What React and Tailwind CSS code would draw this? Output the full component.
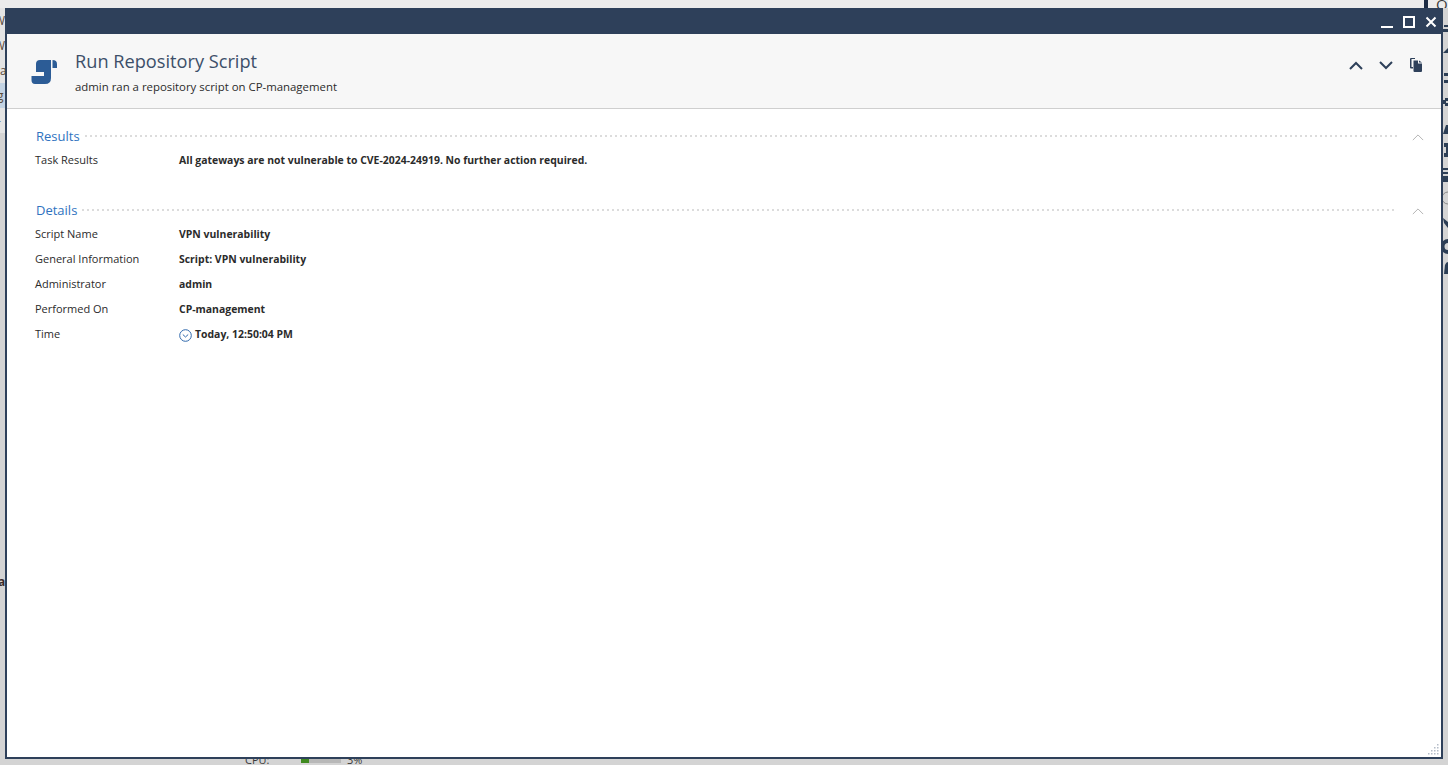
import React from "react";

const FONT = "font-['Open_Sans','Noto_Sans',sans-serif]";

const DETAILS = [
  ["Script Name", "VPN vulnerability"],
  ["General Information", "Script: VPN vulnerability"],
  ["Administrator", "admin"],
  ["Performed On", "CP-management"],
];

function ChevronUp({ className }) {
  return (
    <svg viewBox="0 0 14 8" className={className} fill="none" stroke="currentColor">
      <path d="M1 7 L7 1 L13 7" />
    </svg>
  );
}

function Section({ title, children }) {
  return (
    <section>
      <div className="flex items-center h-5">
        <span className="text-[13px] leading-5 text-[#2f73c0] ml-[1px]">{title}</span>
        <div className="flex-1 mx-[5px] h-[2px] bg-[linear-gradient(to_right,#dcdcdc_2px,transparent_2px)] bg-[length:5px_2px]" />
        <ChevronUp className="w-[12px] h-[7px] mr-[17px] ml-[10px] mt-[2px] text-[#a8a8a8]" />
      </div>
      {children}
    </section>
  );
}

function Row({ label, children }) {
  return (
    <div className="flex h-[25px] items-center text-[11px] leading-4 text-[#2b2b2b]">
      <div className="w-[144px]">{label}</div>
      <div className="font-bold text-[10.45px]">{children}</div>
    </div>
  );
}

export default function App() {
  return (
    <div className={`relative h-[765px] w-[1448px] overflow-hidden bg-[#d4d4d4] ${FONT}`}>
      {/* dimmed page behind the dialog */}
      <div className="h-[8px] bg-[#ececec]" />
      <div className="absolute left-0 top-[8px] w-[5px] h-[125px] bg-[#e4e4e4] overflow-hidden text-[12px] leading-[25px] text-[#5a4a3a]">
        <div className="-ml-[6px]">W</div>
        <div className="-ml-[6px]">W</div>
        <div className="-ml-[5px]">ra</div>
        <div className="-ml-[3px] bg-[#c3d3e3]">g</div>
        <div className="-ml-[3px]">-e</div>
      </div>
      <div className="absolute left-0 top-[573px] w-[5px] overflow-hidden text-[12px] font-bold text-[#3a2a2a]">
        <div className="-ml-[2px]">a</div>
      </div>
      <svg viewBox="0 0 5 260" className="absolute right-0 top-[22px] w-[5px] h-[260px]" fill="#2c3e55">
        <path d="M1 3 H5 V5 H1 Z M0 7 H5 V10 H0 Z" />
        <path d="M0 31 L5 26 V31 Z" />
        <path d="M1 51 H5 V54 H1 Z M1 58 H5 V61 H1 Z" />
        <path d="M2 76 H5 V79 H3 V81 H5 V84 H2 V82 H0 V78 H2 Z" />
        <path d="M0 112 L3 103 H5 V112 Z" />
        <path d="M1 121 H5 V135 H1 V131 H3 V125 H1 Z" />
        <path d="M0 146 H5 V148 H0 Z M0 150 H5 V152 H0 Z M0 154 H5 V160 H0 Z" />
        <path d="M5 170 A6 6 0 0 0 5 182" fill="none" stroke="#8a8a8a" />
        <path d="M0 196 L5 200 V206 L1 201 Z" />
        <path d="M5 217 A7 7 0 0 0 5 232 V228 A3 3 0 0 1 5 221 Z" />
        <path d="M2 243 Q3 240 5 240 V252 H1 Z" />
      </svg>
      <div className="absolute left-[1424px] top-0 w-[24px] h-[8px] flex overflow-hidden">
        <div className="w-[4px] h-full bg-[#1d2c44]" />
        <span className="ml-[8px] -mt-[6px] text-[15px] leading-5 text-[#3a3a3a]">O</span>
      </div>
      <div className="absolute left-[245px] top-[756px] flex items-center h-[9px] text-[11px] text-[#3a3a3a]">
        <span className="w-[56px]">CPU:</span>
        <div className="flex w-[40px] h-[5px] bg-[#b8b8b8]">
          <div className="w-[8px] bg-[#3f8a1f]" />
        </div>
        <span className="ml-[6px]">3%</span>
      </div>

      {/* dialog */}
      <div className="absolute left-[5px] top-[8px] w-[1438px] h-[751px] flex flex-col bg-white border-2 border-[#2e405a] border-t-0">
        <div className="h-[26px] shrink-0 bg-[#2e405a] flex items-center justify-end gap-[10px] pr-[4px] text-white">
          <svg viewBox="0 0 12 12" className="w-[12px] h-[12px] mt-[1px]" fill="currentColor">
            <rect x="0" y="10" width="12" height="2" />
          </svg>
          <svg viewBox="0 0 12 12" className="w-[12px] h-[12px] mt-[1px]" fill="none" stroke="currentColor" strokeWidth="2">
            <rect x="1" y="1" width="10" height="10" />
          </svg>
          <svg viewBox="0 0 12 12" className="w-[12px] h-[12px] mt-[1px]" fill="none" stroke="currentColor" strokeWidth="2">
            <path d="M1.5 1.5 L10.5 10.5 M10.5 1.5 L1.5 10.5" />
          </svg>
        </div>

        <header className="h-[75px] shrink-0 bg-[#f7f7f7] border-b border-[#cfcfcf] flex items-center pl-[24px] pr-[19px]">
          <svg viewBox="0 0 26 25" className="w-[26px] h-[25px] shrink-0">
            <path
              fill="#2c5c96"
              d="M5 5 Q5 1 9 1 L20 1 L20 19 Q20 25 14 25 L4 25 Q0.500 25 0.500 21 L0.500 17 L13 17 L13 13 L5 13 Z"
            />
            <path fill="#2c5c96" d="M21.500 1 Q26 1 26 5 L26 9 L21.500 9 Z" />
          </svg>
          <div className="ml-[18px] pt-[2px]">
            <div className="text-[18.2px] leading-6 text-[#3d4f69] font-medium">Run Repository Script</div>
            <div className="text-[11.4px] leading-4 mt-[6px] text-[#2b2b2b]">admin ran a repository script on CP-management</div>
          </div>
          <div className="ml-auto flex items-center gap-[16px] -mt-[12px] text-[#2e405a]">
            <svg viewBox="0 0 14 9" className="w-[14px] h-[9px]" fill="none" stroke="currentColor" strokeWidth="2">
              <path d="M1 8 L7 2 L13 8" />
            </svg>
            <svg viewBox="0 0 14 9" className="w-[14px] h-[9px]" fill="none" stroke="currentColor" strokeWidth="2">
              <path d="M1 1 L7 7 L13 1" />
            </svg>
            <svg viewBox="0 0 12 14" className="w-[12px] h-[14px] ml-[1px]" fill="currentColor">
              <path d="M0 1 Q0 0 1 0 L5 0 L5 1 L1.500 1 L1.500 9 L3 9 L3 10.500 L1 10.500 Q0 10.500 0 9.500 Z" />
              <path d="M3.500 2.500 L8 2.500 L8 5.500 L12 5.500 L12 13 Q12 14 11 14 L4.500 14 Q3.500 14 3.500 13 Z M9 2.500 L12 4.500 L9 4.500 Z" />
            </svg>
          </div>
        </header>

        <div className="pl-[28px] pt-[17px] flex flex-col gap-[28px]">
          <Section title="Results">
            <div className="mt-[1px]">
              <Row label="Task Results">All gateways are not vulnerable to CVE-2024-24919. No further action required.</Row>
            </div>
          </Section>
          <Section title="Details">
            <div className="mt-[1px]">
              {DETAILS.map(([label, value]) => (
                <Row key={label} label={label}>{value}</Row>
              ))}
              <Row label="Time">
                <span className="flex items-center">
                  <svg viewBox="0 0 13 13" className="w-[13px] h-[13px] mr-[3px] mt-[4px]" fill="none" stroke="#2f68ac">
                    <circle cx="6.500" cy="6.500" r="5.800" />
                    <path d="M3.800 5.500 L6.500 8 L9.200 5.500" />
                  </svg>
                  Today, 12:50:04 PM
                </span>
              </Row>
            </div>
          </Section>
        </div>

        {/* resize grip */}
        <svg viewBox="0 0 11 11" className="absolute right-[2px] bottom-[2px] w-[11px] h-[11px]" fill="#b4bcc8">
          {[[9, 0], [6, 3], [9, 3], [3, 6], [6, 6], [9, 6], [0, 9], [3, 9], [6, 9], [9, 9]].map(([x, y]) => (
            <rect key={`${x}-${y}`} x={x} y={y} width="1.500" height="1.500" />
          ))}
        </svg>
      </div>
    </div>
  );
}
